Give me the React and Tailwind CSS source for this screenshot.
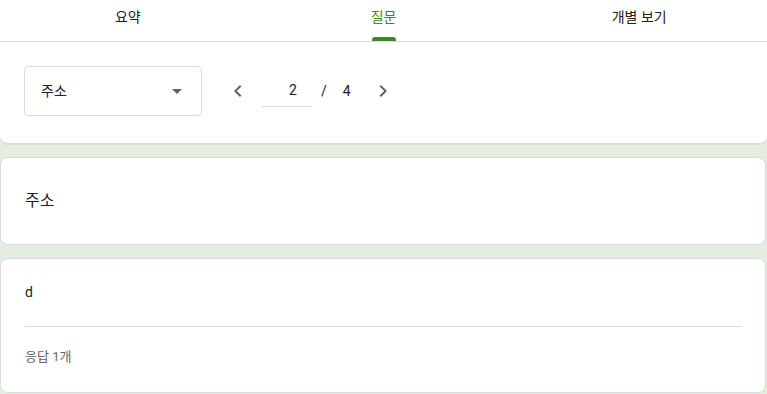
import React, { useState } from "react";

const font = { fontFamily: 'Roboto, "Noto Sans CJK KR", "Noto Sans", sans-serif' };

function Tab({ label, active, onClick }) {
  return (
    <button
      onClick={onClick}
      className={`relative flex-1 h-[41px] flex items-center justify-center text-[14px] ${
        active ? "text-[#3c8a23]" : "text-[#202124]"
      }`}
    >
      <span className="-mt-[6px]">{label}</span>
      {active && (
        <span className="absolute bottom-0 left-1/2 -translate-x-1/2 w-[24px] h-[4px] rounded-t-[3px] bg-[#3c8a23]" />
      )}
    </button>
  );
}

export default function App() {
  const [tab, setTab] = useState(1);
  return (
    <div style={font} className="min-h-[394px] bg-[#e3eee0] flex flex-col gap-[13px] pb-4">
      <div className="bg-white rounded-b-[8px] border-b border-[#dadce0] shadow-[0_1px_1px_rgba(0,0,0,0.06)]">
        <div className="flex border-b border-[#dadce0]">
          {["요약", "질문", "개별 보기"].map((t, i) => (
            <Tab key={t} label={t} active={tab === i} onClick={() => setTab(i)} />
          ))}
        </div>
        <div className="flex items-center px-6 pt-6 pb-[27px]">
          <div className="w-[178px] h-[50px] border border-[#dadce0] rounded-[4px] flex items-center justify-between pl-4 pr-[19px]">
            <span className="text-[14px] text-[#202124]">주소</span>
            <svg width="10" height="5" viewBox="0 0 10 5">
              <path d="M0 0 L10 0 L5 5 Z" fill="#5f6368" />
            </svg>
          </div>
          <div className="flex items-center ml-[24px]">
            <svg width="24" height="24" viewBox="0 0 24 24" className="text-[#5f6368]">
              <path d="M15.4 7.4 14 6l-6 6 6 6 1.4-1.4L10.8 12z" fill="currentColor" />
            </svg>
            <div className="ml-[12px] w-[50px] border-b border-[#dadce0] pt-[4px] pb-[5px] pl-[12px] text-center text-[14px] text-[#202124]">
              2
            </div>
            <span className="ml-[9px] text-[14px] text-[#202124]">/</span>
            <span className="ml-[16px] text-[14px] text-[#202124]">4</span>
            <svg width="24" height="24" viewBox="0 0 24 24" className="ml-[20px] text-[#5f6368]">
              <path d="M8.6 16.6 10 18l6-6-6-6-1.4 1.4 4.6 4.6z" fill="currentColor" />
            </svg>
          </div>
        </div>
      </div>

      <div className="bg-white rounded-[8px] border border-[#dadce0] mr-px py-8 px-6">
        <div className="text-[16px] leading-[22px] text-[#202124]">주소</div>
      </div>

      <div className="bg-white rounded-[8px] border border-[#dadce0] mr-px pt-6 pb-[26px] px-6">
        <div className="text-[14px] leading-[18px] text-[#202124]">d</div>
        <div className="mt-[25px] mr-[-1px] border-t border-[#dadce0]" />
        <div className="mt-[21px] text-[13px] leading-[18px] text-[#5f6368]">응답 1개</div>
      </div>
    </div>
  );
}
